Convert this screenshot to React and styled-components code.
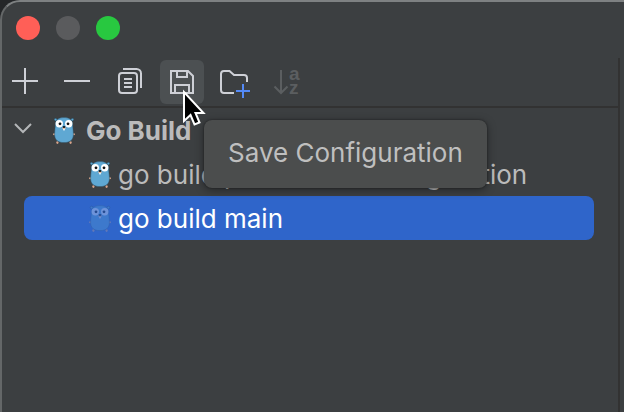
import React from "react";
import styled, { createGlobalStyle } from "styled-components";

const GlobalStyle = createGlobalStyle`
  body {
    margin: 0;
    background: #242628;
    font-family: Inter, "Liberation Sans", sans-serif;
  }
  * {
    box-sizing: border-box;
  }
`;

const Window = styled.div`
  display: flex;
  flex-direction: column;
  min-height: 100vh;
  background: #3c3f41;
  border-top: 2px solid #7e8182;
  border-left: 2px solid #646768;
  border-top-left-radius: 20px;
  overflow: hidden;
`;

const TitleBar = styled.header`
  display: flex;
  gap: 16px;
  height: 56px;
  padding: 14px;
`;

const Light = styled.button`
  width: 24px;
  height: 24px;
  padding: 0;
  border: 0;
  border-radius: 50%;
  background: ${(props) => props.$color};
`;

const Pane = styled.main`
  flex: 1;
  margin-right: 4px;
  border-right: 2px solid #323232;
`;

const Toolbar = styled.div`
  display: flex;
  gap: 8px;
  height: 50px;
  padding: 2px 2px 0;
  border-bottom: 2px solid #323232;
`;

const Tool = styled.div`
  position: relative;
`;

const ToolButton = styled.button`
  display: block;
  width: 44px;
  height: 44px;
  padding: 0;
  border: 0;
  border-radius: 6px;
  background: ${(props) => (props.$hovered ? "#4c5052" : "transparent")};
  color: ${(props) => (props.disabled ? "#5b5e60" : "#ced0d6")};
`;

const Tooltip = styled.div`
  position: absolute;
  z-index: 1;
  top: 60px;
  left: 44px;
  padding: 17px 24px 19px;
  border-radius: 8px;
  background: #4b4d4d;
  box-shadow: 0 2px 10px rgba(0, 0, 0, 0.4), 0 0 2px rgba(0, 0, 0, 0.5);
  color: #bfbfbf;
  font-size: 26px;
  line-height: 32px;
  white-space: nowrap;
`;

const Pointer = styled.svg`
  position: absolute;
  z-index: 2;
  top: 28px;
  left: 20px;
  pointer-events: none;
`;

const Tree = styled.ul`
  margin: 0;
  padding: 0;
  list-style: none;
`;

const Group = styled.button`
  display: flex;
  align-items: center;
  width: 100%;
  height: 44px;
  padding: 2px 10px 0;
  border: 0;
  background: none;
  color: #bbbbbb;
  font: bold 26px/32px Inter, "Liberation Sans", sans-serif;
  text-align: left;

  span {
    margin-left: 9px;
  }
`;

const Chevron = styled.svg`
  margin-right: 19px;
`;

const Item = styled.li`
  display: flex;
  align-items: center;
  gap: 5px;
  height: 44px;
  margin: 0 24px 0 22px;
  padding: 2px 0 0 65px;
  border-radius: 8px;
  background: ${(props) => (props.$selected ? "#2f65ca" : "transparent")};
  color: ${(props) => (props.$selected ? "#ffffff" : "#bbbbbb")};
  font-size: 26px;
  line-height: 32px;
  white-space: nowrap;
`;

const GopherSvg = styled.svg`
  flex: none;
  opacity: ${(props) => (props.$faded ? 0.3 : 1)};
`;

const Gopher = ({ faded }) => (
  <GopherSvg $faded={faded} width="24" height="28" viewBox="0 0 24 28" aria-hidden="true">
    <g fill="#5fa8d3" stroke="#23404f" strokeWidth="0.6">
      <circle cx="2.6" cy="2.6" r="1.4" />
      <circle cx="19.4" cy="2.6" r="1.4" />
    </g>
    <g fill="#d9a58b">
      <ellipse cx="1.2" cy="17.2" rx="1.2" ry="1" />
      <ellipse cx="20.8" cy="17.2" rx="1.2" ry="1" />
      <ellipse cx="4.4" cy="25.6" rx="1.1" ry="1.4" />
      <ellipse cx="17.6" cy="25.6" rx="1.1" ry="1.4" />
    </g>
    <path
      d="M11 0.6C15.6 0.6 19.4 2.4 19.6 7c.1 3 .7 6 .8 10 .1 5.600-3 8.600-9.400 8.600S1.500 22.600 1.600 17c.1-4 .7-7 .8-10C2.600 2.400 6.400.6 11 .6z"
      fill="#5fa8d3"
      stroke="#35566a"
      strokeWidth="0.5"
    />
    <circle cx="6.3" cy="6.8" r="3.7" fill="#fff" />
    <circle cx="15.7" cy="6.8" r="3.7" fill="#fff" />
    <circle cx="7" cy="6.8" r="1.4" fill="#111" />
    <circle cx="15" cy="6.8" r="1.4" fill="#111" />
    <ellipse cx="11" cy="11.2" rx="1.8" ry="1.1" fill="#e0b79d" />
    <ellipse cx="11" cy="10" rx="1.3" ry="0.9" fill="#111" />
    <rect x="10.2" y="11.800" width="1.600" height="1.600" fill="#fff" />
  </GopherSvg>
);

const Icon = ({ children }) => (
  <svg width="44" height="44" viewBox="0 0 44 44" fill="none" stroke="currentColor" strokeWidth="2" aria-hidden="true">
    {children}
  </svg>
);

export default function App() {
  return (
    <>
      <GlobalStyle />
      <Window>
        <TitleBar>
          <Light $color="#ff5f57" aria-label="Close" />
          <Light $color="#5a5b5d" aria-label="Minimize" />
          <Light $color="#28c840" aria-label="Zoom" />
        </TitleBar>
        <Pane>
          <Toolbar role="toolbar">
            <ToolButton aria-label="Add">
              <Icon>
                <path d="M8 21H34M21 8V34" />
              </Icon>
            </ToolButton>
            <ToolButton aria-label="Remove">
              <Icon>
                <path d="M8 21H34" />
              </Icon>
            </ToolButton>
            <ToolButton aria-label="Copy">
              <Icon>
                <rect x="11" y="13" width="18" height="20" rx="3" />
                <path d="M15 9H28.500a4.500 4.500 0 0 1 4.500 4.500V28M16 19H24M16 23H24M16 27H24" />
              </Icon>
            </ToolButton>
            <Tool>
              <ToolButton $hovered aria-label="Save" aria-describedby="save-tip">
                <Icon>
                  <path d="M11 11H28L33 16V33H11ZM17 11V17H27V11M15 33V25H29V33" />
                </Icon>
              </ToolButton>
              <Tooltip id="save-tip" role="tooltip">
                Save Configuration
              </Tooltip>
              <Pointer width="28" height="42" viewBox="0 0 28 42" aria-hidden="true">
                <path
                  d="M4 4V33L10.500 27L14.500 36.500L19.500 34.500L15.500 25H23.500Z"
                  fill="#000"
                  stroke="#fff"
                  strokeWidth="2"
                />
              </Pointer>
            </Tool>
            <ToolButton aria-label="New folder">
              <Icon>
                <path d="M22 33H12a3 3 0 0 1-3-3V14a3 3 0 0 1 3-3H17.500L22 15H32a3 3 0 0 1 3 3V22" />
                <path d="M24 31H38M31 24V38" stroke="#548af7" />
              </Icon>
            </ToolButton>
            <ToolButton disabled aria-label="Sort">
              <Icon>
                <path d="M17 10V33M10.500 26.500L17 33L23.500 26.500" />
                <g fill="currentColor" stroke="none" fontSize="19" fontWeight="600">
                  <text x="25" y="20">a</text>
                  <text x="25" y="34">z</text>
                </g>
              </Icon>
            </ToolButton>
          </Toolbar>
          <Tree>
            <li>
              <Group aria-expanded="true">
                <Chevron width="22" height="22" viewBox="0 0 22 22" fill="none" stroke="#b4b6b8" strokeWidth="2" aria-hidden="true">
                  <path d="M3 4L11 12L19 4" />
                </Chevron>
                <Gopher />
                <span>Go Build</span>
              </Group>
              <Tree>
                <Item>
                  <Gopher />
                  go build production configuration
                </Item>
                <Item $selected>
                  <Gopher faded />
                  go build main
                </Item>
              </Tree>
            </li>
          </Tree>
        </Pane>
      </Window>
    </>
  );
}
